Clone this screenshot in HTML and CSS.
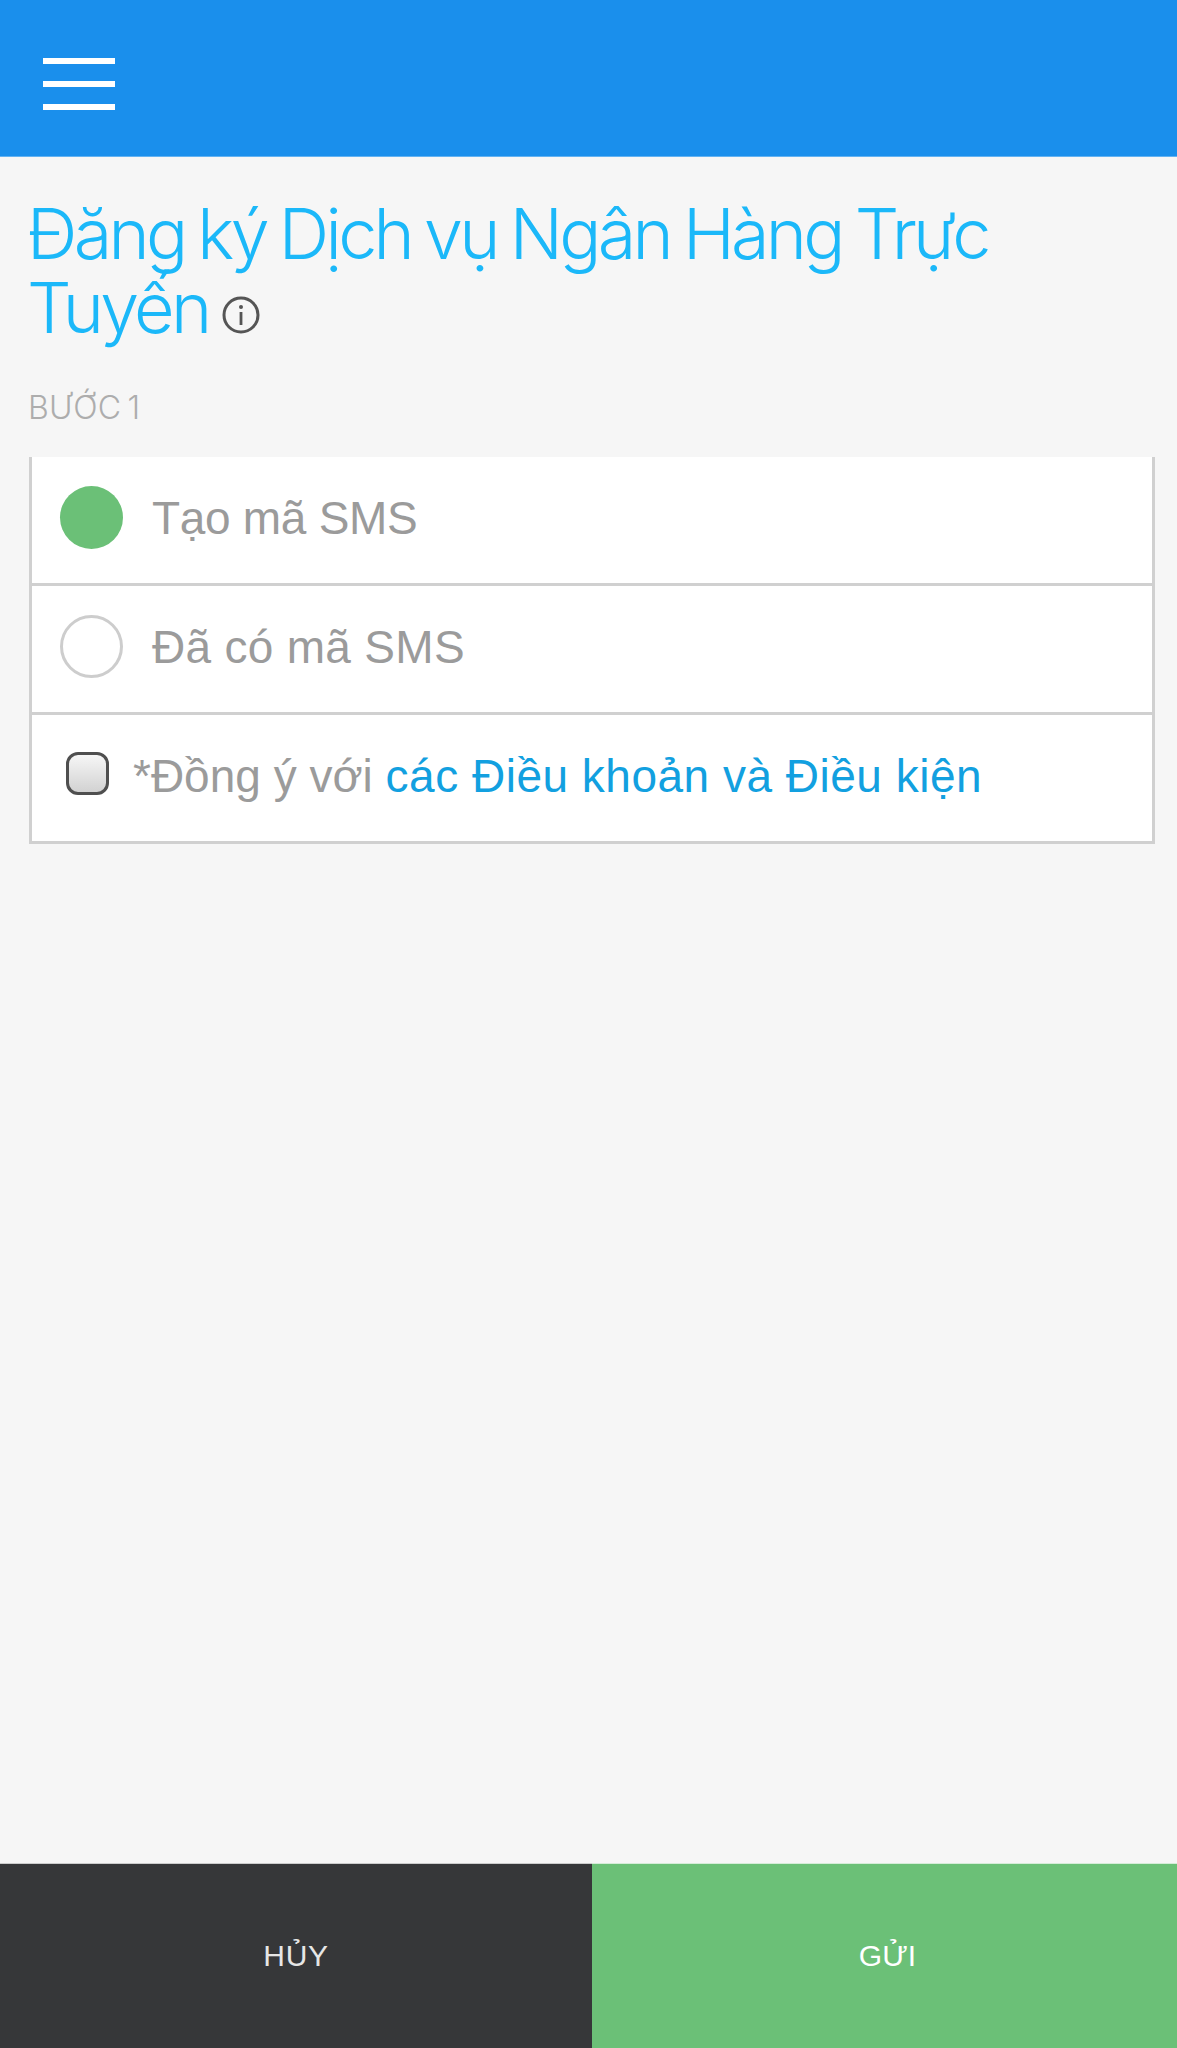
FILE: index.html
```html
<!DOCTYPE html>
<html lang="vi">
<head>
<meta charset="utf-8">
<title>Đăng ký Dịch vụ Ngân Hàng Trực Tuyến</title>
<link rel="stylesheet" href="styles.css">
</head>
<body>
<div class="page">
  <header class="topbar">
    <div class="burger"><span></span><span></span><span></span></div>
  </header>
  <main class="content">
    <h1 class="title">Đăng ký Dịch vụ Ngân Hàng Trực Tuyến<svg class="info" viewBox="0 0 38 38" width="38" height="38"><circle cx="19" cy="19" r="17" fill="none" stroke="#555" stroke-width="3"/><circle cx="19" cy="11" r="2" fill="#555"/><rect x="17.6" y="16" width="2.8" height="13" fill="#555"/></svg></h1>
    <div class="step">BƯỚC 1</div>
    <div class="list">
      <div class="row"><span class="radio radio-on"></span><span class="label label-tight">Tạo mã SMS</span></div>
      <div class="row"><span class="radio"></span><span class="label label-wide">Đã có mã SMS</span></div>
      <div class="row row-check"><span class="check"></span><span class="label">*Đồng ý với <a class="link">các Điều khoản và Điều kiện</a></span></div>
    </div>
  </main>
  <footer class="actions">
    <div class="btn btn-cancel">HỦY</div>
    <div class="btn btn-send">GỬI</div>
  </footer>
</div>
</body>
</html>
```
FILE: styles.css
```css
* { box-sizing: border-box; }
html, body { margin: 0; padding: 0; }
body { font-family: "Liberation Sans", Arial, sans-serif; background: #f6f6f6; }
.page { display: flex; flex-direction: column; height: 2048px; }
.topbar { height: 157px; flex: none; background: #1a8fec; border-bottom: 1px solid #62b2f2; padding: 58px 0 0 43px; }
.burger { display: flex; flex-direction: column; gap: 17px; width: 72px; }
.burger span { display: block; height: 6px; background: #fff; }
.content { flex: 1; padding: 40px 22px 0 29px; }
.title { margin: 0 0 0 -2px; font-family: Inter, "Liberation Sans", sans-serif; font-weight: 300; font-size: 70px; line-height: 74px; letter-spacing: -3.7px; word-spacing: -3px; color: #1bb8f9; }
.info { margin-left: 14px; vertical-align: -1px; }
.step { margin: 43px 0 0 -1px; font-family: Inter, "Liberation Sans", sans-serif; font-weight: 300; font-size: 32px; line-height: 40px; letter-spacing: 0.3px; word-spacing: -3px; color: #adadad; }
.list { margin-top: 29px; background: #fff; border-left: 3px solid #d0d0d0; border-right: 3px solid #d0d0d0; }
.row { display: flex; align-items: center; height: 129px; border-bottom: 3px solid #d0d0d0; padding: 0 0 6px 28px; }
.radio { flex: none; width: 63px; height: 63px; border-radius: 50%; border: 3px solid #cdcdcd; background: #fff; margin-right: 29px; }
.radio-on { border: none; background: #6bc077; }
.label { padding-top: 2px; font-size: 46px; line-height: 56px; color: #9b9b9b; }
.label-tight { letter-spacing: -0.3px; }
.label-wide { letter-spacing: 0.3px; }
.row-check { padding-left: 34px; }
.check { flex: none; width: 43px; height: 43px; border: 3px solid #4f4f4f; border-radius: 12px; background: linear-gradient(#f6f6f6, #d2d2d2); margin: 0 24px 4px 0; }
.link { color: #12a0e0; letter-spacing: 0.5px; }
.actions { flex: none; display: flex; height: 185px; }
.btn { display: flex; align-items: center; justify-content: center; font-size: 30px; border-top: 1px solid #ccc; }
.btn-cancel { width: 592px; background: #363739; color: #e6e6e6; letter-spacing: 0.7px; }
.btn-send { flex: 1; background: #6bc077; color: #fff; border-top-color: #d5ecd8; padding-left: 6px; }
```
